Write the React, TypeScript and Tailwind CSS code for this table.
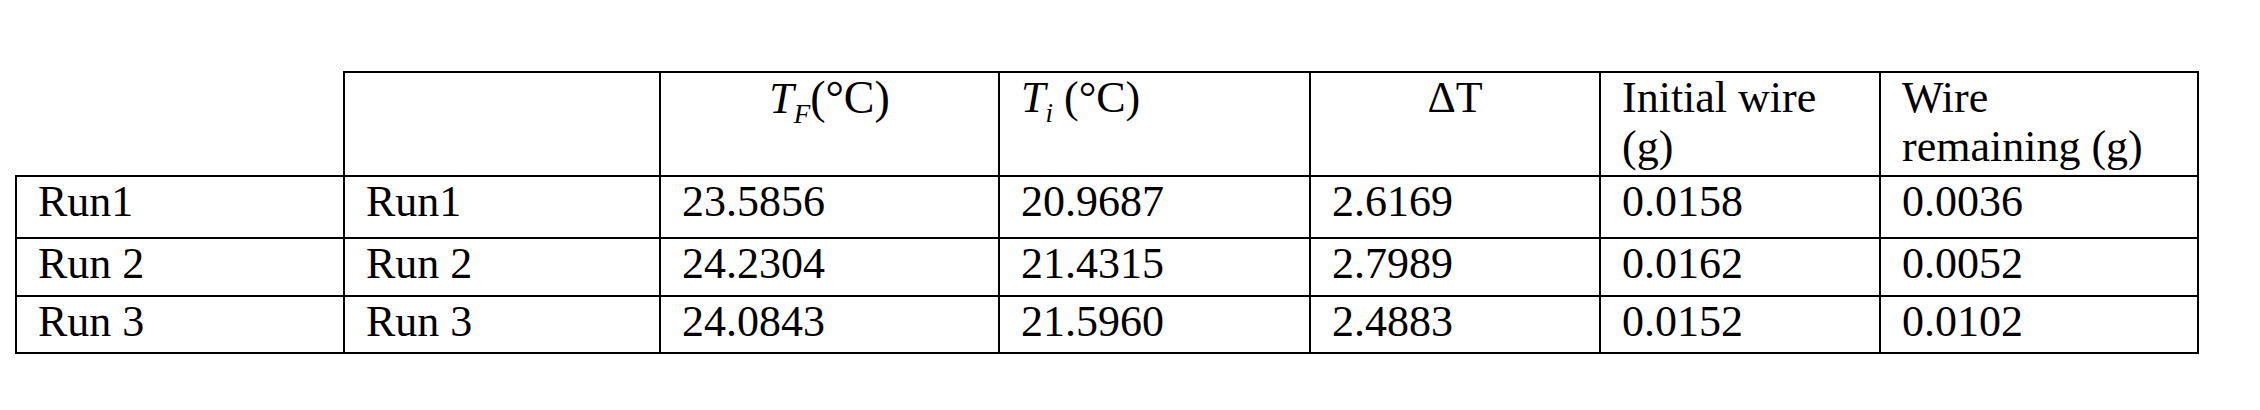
const rows = [
  ['Run1', 'Run1', '23.5856', '20.9687', '2.6169', '0.0158', '0.0036'],
  ['Run 2', 'Run 2', '24.2304', '21.4315', '2.7989', '0.0162', '0.0052'],
  ['Run 3', 'Run 3', '24.0843', '21.5960', '2.4883', '0.0152', '0.0102'],
]

const rowHeights = ['h-[62px]', 'h-[58px]', 'h-[57px]']

const base = 'border-2 border-black pr-2 pt-0 align-top font-normal'
const cell = `${base} pl-[21px] text-left`
const centered = `${base} pl-2 text-center`

export default function App() {
  return (
    <div className="h-[410px] w-[2260px] bg-white pl-[15px] pt-[71px] text-black [font-family:'Liberation_Serif','Times_New_Roman',serif]">
      <table className="w-[2182px] table-fixed border-collapse text-[44px] leading-[49px]">
        <colgroup>
          <col className="w-[328px]" />
          <col className="w-[316px]" />
          <col className="w-[339px]" />
          <col className="w-[311px]" />
          <col className="w-[290px]" />
          <col className="w-[280px]" />
          <col className="w-[318px]" />
        </colgroup>
        <thead>
          <tr className="h-[104px]">
            <th className="border-r-2 border-b-2 border-black" />
            <th className={cell} />
            <th className={centered}>
              <span className="italic">T</span>
              <sub className="relative top-[10px] align-baseline text-[27px] italic">F</sub>
              <span className="text-[46px]">(°C)</span>
            </th>
            <th className={cell}>
              <span className="italic">T</span>
              <sub className="relative top-[10px] align-baseline text-[27px] italic">i</sub> (°C)
            </th>
            <th className={centered}>ΔT</th>
            <th className={cell}>
              Initial wire
              <br />
              (g)
            </th>
            <th className={cell}>
              Wire
              <br />
              remaining (g)
            </th>
          </tr>
        </thead>
        <tbody>
          {rows.map((row, i) => (
            <tr key={row[0]} className={rowHeights[i]}>
              {row.map((value, j) => (
                <td key={j} className={cell}>
                  {value}
                </td>
              ))}
            </tr>
          ))}
        </tbody>
      </table>
    </div>
  )
}
